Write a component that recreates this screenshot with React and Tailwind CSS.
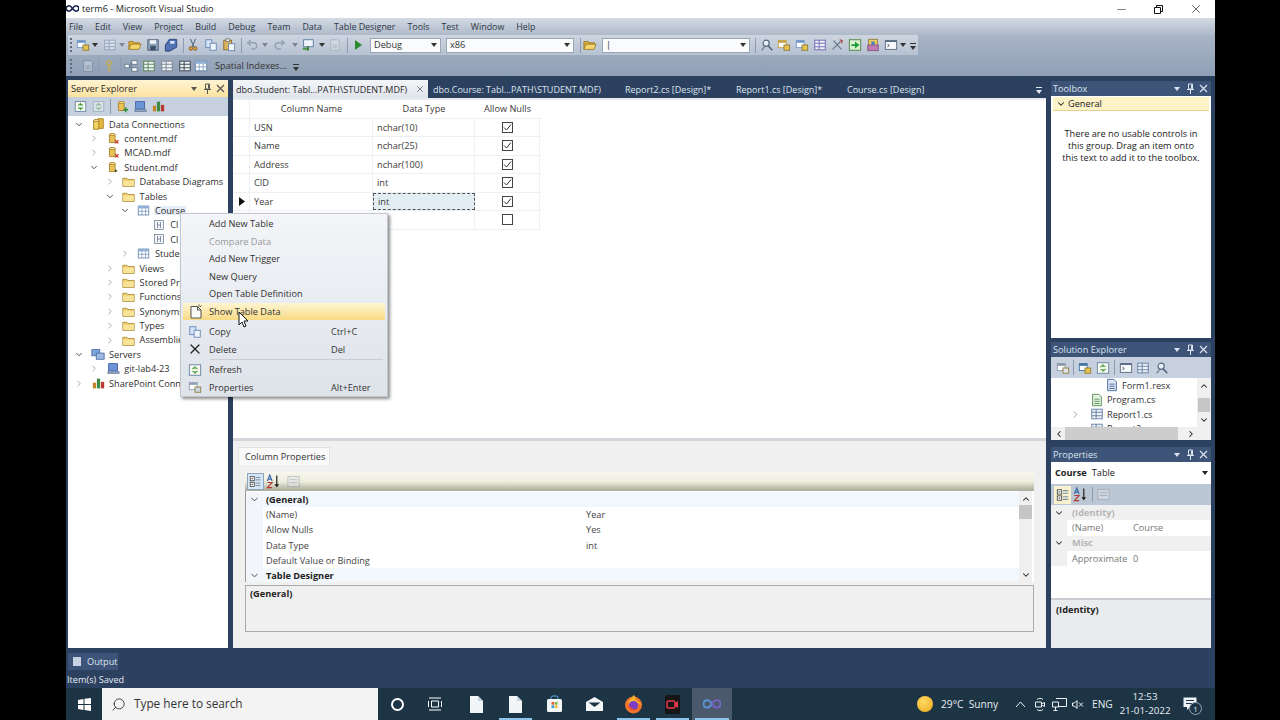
import { ChevronDown, ChevronRight, ChevronUp, ChevronLeft, X, Search, Minus } from "lucide-react";

// tiny toolbar / tree glyphs
const Svg = ({ children, s = 14, className = "" }) => (
  <svg width={s} height={s} viewBox="0 0 16 16" className={`shrink-0 ${className}`}>
    {children}
  </svg>
);

const Folder = () => (
  <Svg s={13}>
    <path d="M1 4h5l1 1.500h8V14H1z" fill="#f0cf6c" stroke="#a98a3a" strokeWidth="1" />
    <path d="M1.500 7h13v6.500h-13z" fill="#f8e39a" />
  </Svg>
);
const Cylinders = () => (
  <Svg s={14}>
    <path d="M8 2h6v11H8z" fill="#e8b93f" stroke="#a27a1d" />
    <path d="M3 4h6v10H3z" fill="#f4d468" stroke="#a27a1d" />
    <ellipse cx="6" cy="4" rx="3" ry="1.200" fill="#fbeaa8" stroke="#a27a1d" />
  </Svg>
);
const Db = ({ mark }) => (
  <Svg s={13}>
    <path d="M3 3h7v10H3z" fill="#e9c25a" stroke="#a27a1d" />
    <ellipse cx="6.500" cy="3" rx="3.500" ry="1.300" fill="#fbeaa8" stroke="#a27a1d" />
    {mark === "x" && <path d="M10 10l4 4m0-4l-4 4" stroke="#c8321e" strokeWidth="1.600" />}
    {mark === "plug" && <path d="M10 10l3 2-3 2z" fill="#333" />}
    {mark === "add" && <path d="M9 12h6M12 9v6" stroke="#2f8f36" strokeWidth="1.800" />}
  </Svg>
);
const TableIco = ({ s = 13 }) => (
  <Svg s={s}>
    <rect x="1.500" y="2.500" width="13" height="11" fill="#fff" stroke="#5c7fa8" />
    <path d="M1.500 2.500h13v3h-13z" fill="#8fb0d6" />
    <path d="M1.500 9h13M6 5.500v8M10.500 5.500v8" stroke="#7f9dbf" />
  </Svg>
);
const ColIco = () => (
  <Svg s={12}>
    <rect x="2" y="2" width="12" height="12" fill="#f4f6f9" stroke="#6d7f96" />
    <path d="M6 4v8M10 4v8M6 8h4" stroke="#5d708a" />
  </Svg>
);
const Servers = () => (
  <Svg s={14}>
    <rect x="1" y="3" width="9" height="7" fill="#7fa5dc" stroke="#4a6ea6" />
    <rect x="6" y="7" width="9" height="7" fill="#9db9e4" stroke="#4a6ea6" />
  </Svg>
);
const Computer = () => (
  <Svg s={13}>
    <rect x="2" y="2" width="11" height="9" fill="#6c93d6" stroke="#3a5c9c" />
    <path d="M1 12h14v2H1z" fill="#9fb4d2" stroke="#5f769a" />
  </Svg>
);
const SharePoint = () => (
  <Svg s={13}>
    <rect x="1" y="7" width="4" height="7" fill="#c7832c" />
    <rect x="6" y="2" width="4" height="12" fill="#3d8a45" />
    <rect x="11" y="6" width="4" height="8" fill="#b83a32" />
  </Svg>
);
const Refresh = ({ s = 14 }) => (
  <Svg s={s}>
    <rect x="1.500" y="2" width="13" height="12" fill="#f7f9f0" stroke="#5f7f9f" />
    <path d="M5 7l3-2.500V6h3M11 9l-3 2.500V10H5" stroke="#3d9a38" strokeWidth="1.300" fill="none" />
  </Svg>
);
const Sheet = ({ fill = "#fff", stroke = "#7f8ea3" }) => (
  <Svg>
    <path d="M3 1.500h7l3 3v10H3z" fill={fill} stroke={stroke} />
    <path d="M5 7h6M5 9.500h6M5 12h6" stroke={stroke} />
  </Svg>
);
const PageCorner = () => (
  <svg width="12" height="15" viewBox="0 0 12 15" className="shrink-0">
    <path d="M1 2.500h6.500L11 6v8H1z" fill="#fbfbf6" stroke="#555" />
    <path d="M7.500 2.500V6H11M9 .5v2M11.500 1.500l-1.500 1.500" stroke="#555" fill="none" />
  </svg>
);
const Boxes = ({ a = "#6f95c8", b = "#e6c34f", c = "#fff" }) => (
  <Svg>
    <rect x="1.500" y="3" width="9" height="8" fill={c} stroke={a} />
    <path d="M1.500 3h9v2.500h-9z" fill={a} />
    <rect x="8" y="8" width="6.500" height="6" fill={b} stroke="#8d7a3a" />
  </Svg>
);
const FolderOpen = () => (
  <Svg>
    <path d="M1 13V4h5l1 1.500h6V8" fill="#dcae3c" stroke="#9a7a25" />
    <path d="M1 13l2.500-6H15l-2.500 6z" fill="#f5d56d" stroke="#9a7a25" />
  </Svg>
);
const Save = ({ c = "#8aa0b8" }) => (
  <Svg>
    <rect x="2" y="2" width="12" height="12" fill={c} stroke="#50627a" />
    <rect x="4.500" y="2.500" width="7" height="4" fill="#eef2f6" />
    <rect x="5" y="9" width="6" height="5" fill="#3e5068" />
  </Svg>
);
const SaveAll = () => (
  <Svg>
    <path d="M6 1.500h8.500v9l-8 4.500h-5v-7z" fill="#4f71b4" stroke="#2b4476" />
    <path d="M7 3.500h5v3H7z" fill="#dfe7f3" />
  </Svg>
);
const Cut = () => (
  <Svg>
    <path d="M5 1l4 9M11 1L7 10" stroke="#5a6a80" strokeWidth="1.300" />
    <circle cx="5.500" cy="12" r="2" fill="#e6a23a" stroke="#7c5a20" />
    <circle cx="10.500" cy="12" r="2" fill="#e6a23a" stroke="#7c5a20" />
  </Svg>
);
const CopyIco = () => (
  <Svg>
    <rect x="2" y="2" width="7" height="9" fill="#d5e3f6" stroke="#6385b5" />
    <rect x="7" y="6" width="7" height="8" fill="#eef4fc" stroke="#6385b5" />
  </Svg>
);
const Paste = () => (
  <Svg>
    <rect x="2" y="2.500" width="9" height="11" fill="#dcb25a" stroke="#8a6b25" />
    <rect x="4.500" y="1" width="4" height="3" fill="#f2f2f2" stroke="#777" />
    <rect x="7.500" y="6.500" width="7" height="8" fill="#f3f6fb" stroke="#6385b5" />
  </Svg>
);
const Undo = ({ flip }) => (
  <Svg className={flip ? "-scale-x-100" : ""}>
    <path d="M4 5.500h6a3.500 3.500 0 0 1 0 7H7" stroke="#93a1b4" strokeWidth="1.600" fill="none" />
    <path d="M6.500 2.500l-3.500 3 3.500 3" stroke="#93a1b4" strokeWidth="1.600" fill="none" />
  </Svg>
);
const Nav = () => (
  <Svg>
    <rect x="3" y="2" width="11" height="8" fill="#f1f5fb" stroke="#54749f" />
    <path d="M2 11h7v2.500H2z" fill="#4a9a44" />
    <path d="M8 9.500v5" stroke="#2e6f2a" strokeWidth="1.500" />
  </Svg>
);
const Gear = ({ c = "#9aa6b6" }) => (
  <Svg>
    <path d="M3 2h8l2 2v10H3z" fill="#d7dde6" stroke={c} />
    <path d="M5 8h6M5 10.500h6" stroke={c} />
  </Svg>
);
const Wrench = () => (
  <Svg>
    <path d="M3 13L12 4M4 3l9 10" stroke="#6b7a8e" strokeWidth="1.500" />
    <path d="M11 2l3 1-1 3" stroke="#b13a33" strokeWidth="1.300" fill="none" />
  </Svg>
);
const GoArrow = () => (
  <Svg>
    <rect x="1.500" y="2" width="13" height="12" fill="#d8efd0" stroke="#44813c" />
    <path d="M4 7h4V4l5 4-5 4V9H4z" fill="#1d9a3a" />
  </Svg>
);
const Person = () => (
  <Svg>
    <rect x="3" y="1.500" width="10" height="9" fill="#eecb5c" stroke="#8d7a3a" />
    <rect x="2" y="8" width="12" height="6.500" fill="#c27bb2" stroke="#80557a" />
    <rect x="6" y="4" width="4" height="4" fill="#4e81b8" />
  </Svg>
);
const Term = () => (
  <Svg>
    <rect x="1.500" y="3" width="13" height="10" fill="#f8f9fb" stroke="#53657f" />
    <path d="M1.500 3h13v1.500h-13z" fill="#53657f" />
    <path d="M4 7l2 1.500L4 10" stroke="#333" fill="none" />
  </Svg>
);
const Key = () => (
  <Svg>
    <circle cx="8" cy="4.500" r="2.500" fill="none" stroke="#c4ad52" strokeWidth="1.500" />
    <path d="M8 7v7M8 11h2M8 13.500h2" stroke="#c4ad52" strokeWidth="1.500" />
  </Svg>
);
const Relations = () => (
  <Svg>
    <rect x="9" y="2" width="6" height="4" fill="#fff" stroke="#61748c" />
    <rect x="9" y="10" width="6" height="4" fill="#fff" stroke="#61748c" />
    <rect x="1" y="6" width="5" height="4" fill="#fff" stroke="#61748c" />
    <path d="M6 8h2V4h1M8 8v4h1" stroke="#61748c" fill="none" />
  </Svg>
);
const Grid2 = ({ c = "#5c7aa0" }) => (
  <Svg>
    <rect x="2" y="2.500" width="12" height="11" fill="#eef2f7" stroke={c} />
    <path d="M2 6h12M2 10h12M7 2.500v11" stroke={c} />
  </Svg>
);
const Magnify = () => (
  <Svg>
    <circle cx="7" cy="6" r="3.500" fill="#e7eef7" stroke="#55677f" strokeWidth="1.300" />
    <path d="M9.500 9l4.500 5" stroke="#55677f" strokeWidth="1.800" />
    <path d="M2 14l3-4" stroke="#55677f" strokeWidth="1.300" />
  </Svg>
);
const Categorized = ({ s = 15 }) => (
  <Svg s={s}>
    <rect x="1.500" y="2" width="5" height="5" fill="#fff" stroke="#444" />
    <rect x="1.500" y="9" width="5" height="5" fill="#fff" stroke="#444" />
    <path d="M3 4.500h2M3 11.500h2" stroke="#222" />
    <path d="M8 3h6M8 6h6M8 10h6M8 13h6" stroke="#7b8ea6" strokeWidth="1.200" />
  </Svg>
);
const SortAz = ({ s = 15 }) => (
  <Svg s={s}>
    <path d="M1.500 7.500L4 1l2.500 6.500M2.500 5.500h3" stroke="#3a66a8" strokeWidth="1.200" fill="none" />
    <path d="M1.500 9h5L1.500 14.500h5" stroke="#b03a30" strokeWidth="1.200" fill="none" />
    <path d="M11.500 1.500v11" stroke="#222" strokeWidth="1.300" />
    <path d="M9 11l2.500 3.500L14 11z" fill="#222" />
  </Svg>
);
const Pages = () => (
  <Svg s={15} className="opacity-50">
    <rect x="2" y="2.500" width="12" height="11" fill="#e1e4e8" stroke="#8f98a3" />
    <path d="M4 6h8M4 9h8" stroke="#8f98a3" />
  </Svg>
);

const Caret = ({ c = "#333", className = "" }) => (
  <svg width="6" height="4" viewBox="0 0 6 4" className={`shrink-0 ${className}`}>
    <path d="M0 0h6L3 4z" fill={c} />
  </svg>
);
const Sep = ({ className = "" }) => <div className={`w-px h-[15px] bg-[#8d9bb0] shrink-0 ${className}`} />;
const Grip = () => <div className="w-[2px] h-[14px] shrink-0 border-l-2 border-dotted border-[#5d6d84]" />;
const Overflow = ({ c = "#333" }) => (
  <div className="flex flex-col gap-[2px] items-center w-[6px] shrink-0 mt-[3px]">
    <div className={`w-[6px] h-px ${c === "#333" ? "bg-[#333]" : "bg-[#e4e9f0]"}`} />
    <Caret c={c} />
  </div>
);
const PanelBtns = ({ c }) => (
  <div className="ml-auto flex items-center gap-[4px]">
    <Caret c={c} />
    <svg width="9" height="11" viewBox="0 0 9 11" className="ml-[2px]">
      <path d="M2.500 1h4v5h-4zM1 6.500h7M4.500 6.500V11M5.500 1.500v4" stroke={c} fill="none" />
    </svg>
    <svg width="9" height="9" viewBox="0 0 9 9">
      <path d="M1 1l7 7M8 1L1 8" stroke={c} strokeWidth="1.200" />
    </svg>
  </div>
);
const Combo = ({ w, text }) => (
  <div className={`${w} h-[15px] bg-[#fafbfc] border border-[#9aa6b6] flex items-center pl-[3px] pr-[3px] shrink-0`}>
    <span className="text-[#333]">{text}</span>
    <Caret c="#333" className="ml-auto" />
  </div>
);

const tree = [
  { l: 0, t: "Data Connections", o: 1, i: <Cylinders /> },
  { l: 1, t: "content.mdf", i: <Db mark="x" /> },
  { l: 1, t: "MCAD.mdf", i: <Db mark="x" /> },
  { l: 1, t: "Student.mdf", o: 1, i: <Db mark="plug" /> },
  { l: 2, t: "Database Diagrams", i: <Folder /> },
  { l: 2, t: "Tables", o: 1, i: <Folder /> },
  { l: 3, t: "Course", o: 1, i: <TableIco />, sel: 1 },
  { l: 4, t: "Cl", i: <ColIco />, leaf: 1 },
  { l: 4, t: "Cl", i: <ColIco />, leaf: 1 },
  { l: 3, t: "Student", i: <TableIco /> },
  { l: 2, t: "Views", i: <Folder /> },
  { l: 2, t: "Stored Procedures", i: <Folder /> },
  { l: 2, t: "Functions", i: <Folder /> },
  { l: 2, t: "Synonyms", i: <Folder /> },
  { l: 2, t: "Types", i: <Folder /> },
  { l: 2, t: "Assemblies", i: <Folder /> },
  { l: 0, t: "Servers", o: 1, i: <Servers /> },
  { l: 1, t: "git-lab4-23", i: <Computer /> },
  { l: 0, t: "SharePoint Connections", i: <SharePoint /> },
];

function TreeRow({ row }) {
  return (
    <div className="h-[14.4px] flex items-center whitespace-nowrap text-[#2f2f2f]" style={{ paddingLeft: row.l * 15.3 + 6 }}>
      <div className="w-[10px] flex justify-center shrink-0">
        {!row.leaf &&
          (row.o ? (
            <ChevronDown size={11} strokeWidth={2} className="text-[#333]" />
          ) : (
            <ChevronRight size={11} strokeWidth={2} className="text-[#9a9a9a]" />
          ))}
      </div>
      <div className="w-[14px] ml-[7px] flex justify-center shrink-0">{row.i}</div>
      <span className={`ml-[3px] px-[1px] ${row.sel ? "bg-[#e4ecf5]" : ""}`}>{row.t}</span>
    </div>
  );
}

const columns = [
  ["USN", "nchar(10)", true],
  ["Name", "nchar(25)", true],
  ["Address", "nchar(100)", true],
  ["CID", "int", true],
  ["Year", "int", true, true],
  ["", "", false],
];

function Check({ on }) {
  return (
    <div className="w-[11px] h-[11px] border border-[#444] bg-white flex items-center justify-center">
      {on && (
        <svg width="9" height="9" viewBox="0 0 9 9">
          <path d="M1 4.500l2.500 2.500L8 1.500" stroke="#333" fill="none" />
        </svg>
      )}
    </div>
  );
}

function MenuItem({ icon, text, hint, dim, hot }) {
  return (
    <div
      className={`h-[17.5px] flex items-center relative ${
        hot ? "bg-gradient-to-b from-[#fdf5d2] to-[#f9da82] mx-[2px]" : ""
      } ${dim ? "text-[#9a9a9a]" : "text-[#333]"}`}
    >
      <div className={`${hot ? "w-[26px]" : "w-[28px]"} flex justify-center shrink-0`}>{icon}</div>
      <span>{text}</span>
      {hint && <span className="absolute left-[150px]">{hint}</span>}
    </div>
  );
}

function ContextMenu() {
  return (
    <div className="absolute left-[180px] top-[213px] w-[208px] h-[184px] pt-[1px] bg-gradient-to-b from-[#f3f5f8] to-[#dee3ea] border border-[#c3c8cf] shadow-[2px_2px_3px_rgba(0,0,0,0.45)]">
      <MenuItem text="Add New Table" />
      <MenuItem text="Compare Data" dim />
      <MenuItem text="Add New Trigger" />
      <MenuItem text="New Query" />
      <MenuItem text="Open Table Definition" />
      <MenuItem text="Show Table Data" hot icon={<PageCorner />} />
      <div className="h-[3px]" />
      <MenuItem text="Copy" hint="Ctrl+C" icon={<CopyIco />} />
      <MenuItem text="Delete" hint="Del" icon={<X size={16} strokeWidth={1.800} className="text-[#222]" />} />
      <div className="h-px ml-[29px] my-px bg-[#c9ced6] mr-[4px]" />
      <MenuItem text="Refresh" icon={<Refresh />} />
      <MenuItem text="Properties" hint="Alt+Enter" icon={<Boxes a="#8ea0b6" b="#cfd6df" />} />
    </div>
  );
}

const Cursor = () => (
  <svg width="12" height="17" viewBox="0 0 12 17" className="absolute left-[238px] top-[311px]">
    <path d="M1 1v13l3-3 2 5 2-1-2-5h4z" fill="#fff" stroke="#111" strokeWidth="1" />
  </svg>
);

function PropRow({ name, value, head }) {
  return (
    <div className={`h-[15.2px] flex items-center ${head ? "bg-[#f2f7fb]" : ""}`}>
      <div className="w-[17px] h-full bg-[#f2f6fa] flex items-center justify-center shrink-0">
        {head && <ChevronDown size={11} strokeWidth={2} className="text-[#444]" />}
      </div>
      <span className={`ml-[3px] w-[320px] shrink-0 ${head ? "font-bold text-[#222]" : "text-[#444]"}`}>{name}</span>
      <span className="text-[#444]">{value}</span>
    </div>
  );
}

const SideTitle = ({ children }) => (
  <div className="h-[15px] bg-[#3d5478] flex items-center pl-[2px] pr-[3px] text-[#dbe3ee] shrink-0">
    {children}
    <PanelBtns c="#dbe3ee" />
  </div>
);

const TaskIcon = ({ children, mark, active }) => (
  <div className={`w-[39.3px] h-full flex items-center justify-center relative shrink-0 ${active ? "bg-[#4a5a6c]" : ""}`}>
    {children}
    {mark && <div className="absolute bottom-0 left-[3px] right-[3px] h-[2px] bg-[#8cc4ec]" />}
  </div>
);

const Doc = () => (
  <svg width="13" height="17" viewBox="0 0 13 17">
    <path d="M0 0h8l5 5v12H0z" fill="#f2f5f7" />
    <path d="M8 0l5 5H8z" fill="#c7d2da" />
  </svg>
);

const VsLogo = ({ w = 13, a = "#0b1f4a", b = "#0b1f4a" }) => (
  <svg width={w} height={w * 0.54} viewBox="0 0 24 13" className="shrink-0">
    <path d="M12 6.500C9 2 7.500 1.500 5.500 1.500a5 5 0 0 0 0 10c2 0 3.500-.5 6.500-5z" fill="none" stroke={a} strokeWidth="2.600" />
    <path d="M12 6.500c3-4.500 4.500-5 6.500-5a5 5 0 0 1 0 10c-2 0-3.500-.5-6.500-5z" fill="none" stroke={b} strokeWidth="2.600" />
  </svg>
);

export default function App() {
  return (
    <div className="w-[1280px] h-[720px] bg-black overflow-hidden relative font-['Open_Sans',sans-serif] text-[9.2px] leading-none">
      <div className="ml-[66px] w-[1149px] h-full flex flex-col bg-[#2c405f]">
        {/* title bar */}
        <div className="h-[18px] bg-white flex items-center shrink-0 text-[#222]">
          <VsLogo />
          <span className="ml-[3px]">term6 - Microsoft Visual Studio</span>
          <div className="ml-auto flex items-center pr-[1px]">
            <div className="w-[37px] flex justify-center"><Minus size={13} strokeWidth={1} className="text-[#111]" /></div>
            <div className="w-[37px] flex justify-center">
              <svg width="9" height="9" viewBox="0 0 9 9">
                <path d="M.5 2.500h6v6h-6zM2.500 2.500v-2h6v6h-2" fill="none" stroke="#111" />
              </svg>
            </div>
            <div className="w-[37px] flex justify-center"><X size={14} strokeWidth={1.100} className="text-[#111]" /></div>
          </div>
        </div>

        {/* menu */}
        <div className="h-[17px] shrink-0 bg-gradient-to-b from-[#d3dae3] to-[#aeb9c9] flex items-center pl-[3px] pt-[1px] gap-[12px] text-[#2c3645] text-[8.9px]">
          {["File", "Edit", "View", "Project", "Build", "Debug", "Team", "Data", "Table Designer", "Tools", "Test", "Window", "Help"].map((m) => (
            <span key={m}>{m}</span>
          ))}
        </div>

        <div className="h-[41px] shrink-0 bg-gradient-to-b from-[#a9b5c6] to-[#8f9fb5]">
          {/* standard toolbar */}
          <div className="ml-[2px] w-[850px] h-[20px] bg-gradient-to-b from-[#ced5e0] to-[#b6c1d1] flex items-center pl-[2px] text-[#333]">
            <Grip />
            <div className="ml-[4px]"><Boxes /></div>
            <Caret className="ml-[2px]" />
            <div className="ml-[5px] opacity-50"><Grid2 /></div>
            <Caret c="#7b8798" className="ml-[2px]" />
            <div className="ml-[3px]"><FolderOpen /></div>
            <div className="ml-[4px]"><Save /></div>
            <div className="ml-[4px]"><SaveAll /></div>
            <Sep className="ml-[5px]" />
            <div className="ml-[2px]"><Cut /></div>
            <div className="ml-[4px]"><CopyIco /></div>
            <div className="ml-[4px]"><Paste /></div>
            <Sep className="ml-[5px]" />
            <div className="ml-[3px]"><Undo /></div>
            <Caret c="#7b8798" className="ml-[3px]" />
            <div className="ml-[5px]"><Undo flip /></div>
            <Caret c="#7b8798" className="ml-[5px]" />
            <div className="ml-[3px]"><Nav /></div>
            <Caret className="ml-[4px]" />
            <div className="ml-[3px] opacity-60"><Gear /></div>
            <Sep className="ml-[5px]" />
            <svg width="14" height="14" viewBox="0 0 14 14" className="ml-[3px] shrink-0">
              <path d="M4 2l7 5-7 5z" fill="#2b8a2e" />
            </svg>
            <div className="ml-[5px]"><Combo w="w-[71px]" text="Debug" /></div>
            <div className="ml-[5px]"><Combo w="w-[128px]" text="x86" /></div>
            <Sep className="ml-[6px]" />
            <div className="ml-[2px]"><FolderOpen /></div>
            <div className="ml-[5px]"><Combo w="w-[148px]" text="|" /></div>
            <Sep className="ml-[5px]" />
            <div className="ml-[4px]"><Magnify /></div>
            <div className="ml-[3px]"><Boxes a="#c2a13f" /></div>
            <div className="ml-[4px]"><Boxes /></div>
            <div className="ml-[4px]"><Grid2 c="#6a5fb0" /></div>
            <div className="ml-[3px]"><Wrench /></div>
            <div className="ml-[4px]"><GoArrow /></div>
            <div className="ml-[4px]"><Person /></div>
            <div className="ml-[4px]"><Term /></div>
            <Caret className="ml-[2px]" />
            <div className="ml-[4px]"><Overflow /></div>
          </div>
          {/* table designer toolbar */}
          <div className="h-[21px] flex items-center pl-[4px] text-[#333]">
            <Grip />
            <div className="ml-[9px] opacity-50"><Gear c="#6d7888" /></div>
            <Sep className="ml-[3px]" />
            <div className="ml-[3px]"><Key /></div>
            <Sep className="ml-[4px]" />
            <div className="ml-[3px]"><Relations /></div>
            <div className="ml-[4px]"><Grid2 c="#4f7f4a" /></div>
            <div className="ml-[4px]"><Grid2 c="#767f8c" /></div>
            <div className="ml-[4px]"><Grid2 c="#2f3a48" /></div>
            <div className="ml-[2px]"><TableIco s={14} /></div>
            <span className="ml-[7px] w-[69px] whitespace-nowrap">Spatial Indexes...</span>
            <div className="ml-[9px]"><Overflow /></div>
          </div>
        </div>

        {/* docked panels */}
        <div className="flex-1 min-h-0 flex pt-[4px] pl-[2px] pr-[3px]">
          {/* server explorer */}
          <div className="w-[160px] shrink-0 h-[568px] flex flex-col bg-white">
            <div className="h-[17px] bg-gradient-to-b from-[#fff4d2] to-[#fbe29f] flex items-center pl-[3px] pr-[3px] text-[#2b2b2b] shrink-0">
              Server Explorer
              <PanelBtns c="#555" />
            </div>
            <div className="h-[19px] bg-[#c6d0de] flex items-center pl-[6px] shrink-0">
              <Refresh s={13} />
              <div className="ml-[5px] opacity-40"><Refresh s={13} /></div>
              <Sep className="ml-[5px]" />
              <div className="ml-[5px]"><Db mark="add" /></div>
              <div className="ml-[5px]"><Computer /></div>
              <div className="ml-[5px]"><SharePoint /></div>
            </div>
            <div className="pt-[1px] overflow-hidden">
              {tree.map((r, i) => (
                <TreeRow key={i} row={r} />
              ))}
            </div>
          </div>

          {/* centre */}
          <div className="w-[813px] shrink-0 ml-[5px] h-[568px] flex flex-col">
            <div className="h-[18px] flex items-center shrink-0 text-[#dde5ef] whitespace-nowrap text-[9px]">
              <div className="w-[195px] h-full bg-gradient-to-b from-[#f3f5f8] to-[#dfe4eb] flex items-center pl-[3px] text-[#2a2a2a] shrink-0">
                dbo.Student: Tabl...PATH\STUDENT.MDF)
                <X size={10} strokeWidth={1.500} className="ml-auto mr-[3px] text-[#444]" />
              </div>
              <span className="ml-[5px] w-[192px] shrink-0">dbo.Course: Tabl...PATH\STUDENT.MDF)</span>
              <span className="w-[111px] shrink-0">Report2.cs [Design]*</span>
              <span className="w-[111px] shrink-0">Report1.cs [Design]*</span>
              <span className="w-[78px] shrink-0">Course.cs [Design]</span>
              <div className="ml-auto mr-[4px]"><Overflow c="#e4e9f0" /></div>
            </div>
            <div className="h-[2px] bg-[#e8ebf0] shrink-0" />

            {/* table design */}
            <div className="h-[338px] bg-white shrink-0 text-[#3a3a3a]">
              <div className="h-[18.500px] flex items-center border-b border-[#eef0f3] w-[308px]">
                <div className="w-[17px] h-full border-r border-[#eef0f3]" />
                <div className="w-[123px] text-center">Column Name</div>
                <div className="w-[102px] text-center">Data Type</div>
                <div className="w-[65px] text-center">Allow Nulls</div>
              </div>
              {columns.map(([name, type, on, cur], i) => (
                <div key={i} className="h-[18.5px] flex items-center border-b border-[#eef0f3] w-[308px]">
                  <div className="w-[17px] h-full border-r border-[#eef0f3] flex items-center justify-center pl-[1px]">
                    {cur && (
                      <svg width="6" height="9" viewBox="0 0 6 9">
                        <path d="M0 0l6 4.500L0 9z" fill="#111" />
                      </svg>
                    )}
                  </div>
                  <div className="w-[123px] h-full flex items-center pl-[4px] border-r border-[#eef0f3]">{name}</div>
                  <div className={`w-[102px] h-full flex items-center pl-[4px] ${cur ? "bg-[#e3eef4] border border-dashed border-[#555]" : "border-r border-[#eef0f3]"}`}>{type}</div>
                  <div className="w-[65px] h-full flex items-center justify-center border-r border-[#eef0f3]">
                    <Check on={on} />
                  </div>
                </div>
              ))}
            </div>

            <div className="h-[3px] bg-[#d3d6da] shrink-0" />

            {/* column properties */}
            <div className="flex-1 bg-[#f0f0f0] pt-[6px] text-[#333]">
              <div className="ml-[5px] w-[92px] h-[18px] bg-[#f9f9f9] border border-b-0 border-[#e2e2e2] flex items-center pl-[6px] whitespace-nowrap">Column Properties</div>
              <div className="ml-[12px] mt-[7px] w-[789px]">
                <div className="h-[19px] bg-gradient-to-b from-[#f7f7ee] via-[#eeeedf] to-[#a9a99a] flex items-center pl-[2px]">
                  <div className="w-[17px] h-[17px] bg-[#d6e6f5] border border-[#8aa5c2] flex items-center justify-center"><Categorized s={13} /></div>
                  <div className="ml-[2px]"><SortAz /></div>
                  <div className="ml-[5px]"><Pages /></div>
                </div>
                <div className="h-[91px] flex bg-white border-l border-[#999]">
                  <div className="flex-1 pt-[1px] overflow-hidden">
                    <PropRow name="(General)" head />
                    <PropRow name="(Name)" value="Year" />
                    <PropRow name="Allow Nulls" value="Yes" />
                    <PropRow name="Data Type" value="int" />
                    <PropRow name="Default Value or Binding" />
                    <PropRow name="Table Designer" head />
                  </div>
                  <div className="w-[13px] mr-[2px] bg-[#f0f0f0] flex flex-col items-center shrink-0 pt-[3px] pb-[2px]">
                    <ChevronUp size={10} strokeWidth={2.500} className="text-[#222] shrink-0" />
                    <div className="w-full h-[14px] bg-[#c6c6c6] mt-[1px] shrink-0" />
                    <ChevronDown size={10} strokeWidth={2.500} className="text-[#222] mt-auto shrink-0" />
                  </div>
                </div>
                <div className="h-[47px] mt-[3px] border border-[#aaa] pl-[4px] pt-[3px] font-bold text-[#222]">(General)</div>
              </div>
            </div>
          </div>

          {/* right docks */}
          <div className="w-[160px] shrink-0 ml-[5px] pt-[1px] flex flex-col">
            <SideTitle>Toolbox</SideTitle>
            <div className="h-[242px] bg-white pt-[1px] shrink-0">
              <div className="h-[14px] mx-[2px] bg-[#fdf3c8] border-b border-[#e6d28a] flex items-center pl-[3px] gap-[2px] text-[#222]">
                <ChevronDown size={10} strokeWidth={2.500} />
                General
              </div>
              <p className="mt-[17px] text-center leading-[12px] text-[#222]">
                There are no usable controls in
                <br />
                this group. Drag an item onto
                <br />
                this text to add it to the toolbox.
              </p>
            </div>
            <div className="h-[4px] shrink-0" />
            <SideTitle>Solution Explorer</SideTitle>
            <div className="h-[21px] bg-[#c6d0de] flex items-center pl-[5px] shrink-0">
              <Boxes a="#8a97a8" b="#dfe3e8" />
              <Sep className="ml-[3px]" />
              <div className="ml-[4px]"><Boxes a="#3f6f9f" /></div>
              <div className="ml-[4px]"><Refresh /></div>
              <Sep className="ml-[4px]" />
              <div className="ml-[4px]"><Term /></div>
              <div className="ml-[3px]"><Grid2 /></div>
              <div className="ml-[5px]"><Magnify /></div>
            </div>
            <div className="h-[49px] flex bg-white shrink-0 overflow-hidden text-[#333]">
              <div className="flex-1 min-w-0">
                <div className="h-[14.5px] flex items-center pl-[54px] gap-[3px]"><Sheet fill="#dfe8f5" stroke="#3f5f94" />Form1.resx</div>
                <div className="h-[14.5px] flex items-center pl-[39px] gap-[3px]"><Sheet fill="#e8f3e6" stroke="#4a8a45" />Program.cs</div>
                <div className="h-[14.5px] flex items-center pl-[19px]">
                  <ChevronRight size={11} strokeWidth={2} className="text-[#9a9a9a]" />
                  <div className="ml-[9px] mr-[3px]"><Grid2 /></div>
                  Report1.cs
                </div>
                <div className="h-[14.500px] flex items-center pl-[39px] gap-[3px]"><Grid2 />Report2</div>
              </div>
              <div className="w-[14px] bg-[#f0f0f0] flex flex-col items-center shrink-0 pt-[3px]">
                <ChevronUp size={10} strokeWidth={2.500} className="text-[#222] shrink-0" />
                <div className="w-[12px] h-[14px] bg-[#c6c6c6] mt-[7px] shrink-0" />
                <ChevronDown size={10} strokeWidth={2.500} className="text-[#222] mt-[3px] shrink-0" />
              </div>
            </div>
            <div className="h-[13px] bg-[#f0f0f0] flex items-center justify-between px-[3px] shrink-0">
              <ChevronLeft size={10} strokeWidth={2.500} className="text-[#222]" />
              <div className="w-[113px] h-full bg-[#cdcdcd] ml-[1px] mr-auto" />
              <ChevronRight size={10} strokeWidth={2.500} className="text-[#222] mr-[12px]" />
            </div>
            <div className="h-[7px] shrink-0" />
            <SideTitle>Properties</SideTitle>
            <div className="h-[22px] bg-white flex items-center pl-[4px] pr-[3px] text-[#222] shrink-0">
              <span className="font-bold">Course</span>
              <span className="ml-[5px]">Table</span>
              <Caret c="#222" className="ml-auto" />
            </div>
            <div className="h-[21px] bg-[#bcc7d5] flex items-center pl-[3px] shrink-0">
              <div className="w-[17px] h-[18px] bg-[#f7f1cf] flex items-center justify-center"><Categorized s={14} /></div>
              <div className="ml-[2px]"><SortAz /></div>
              <Sep className="ml-[4px]" />
              <div className="ml-[3px]"><Pages /></div>
            </div>
            <div className="h-[93px] bg-white shrink-0 text-[#777]">
              <div className="h-[15px] bg-[#f0f0f0] flex items-center text-[#b5b5b5] font-bold">
                <div className="w-[16px] flex justify-center"><ChevronDown size={10} strokeWidth={2.500} className="text-[#333]" /></div>
                <span className="ml-[5px]">(Identity)</span>
              </div>
              <div className="h-[15.500px] flex items-center">
                <div className="w-[16px] h-full bg-[#f0f0f0]" />
                <span className="ml-[5px] w-[61px]">(Name)</span>
                <span>Course</span>
              </div>
              <div className="h-[15px] bg-[#f0f0f0] flex items-center text-[#b5b5b5] font-bold">
                <div className="w-[16px] flex justify-center"><ChevronDown size={10} strokeWidth={2.500} className="text-[#333]" /></div>
                <span className="ml-[5px]">Misc</span>
              </div>
              <div className="h-[15.500px] flex items-center">
                <div className="w-[16px] h-full bg-[#f0f0f0]" />
                <span className="ml-[5px] w-[61px]">Approximate</span>
                <span>0</span>
              </div>
            </div>
            <div className="h-[2px] bg-[#c9cdd2] shrink-0" />
            <div className="h-[48px] bg-[#e9ebee] pl-[5px] pt-[5px] font-bold text-[#222] shrink-0">(Identity)</div>
          </div>
        </div>

        {/* output tab + status */}
        <div className="h-[19px] shrink-0 pl-[2px] flex items-start">
          <div className="w-[50px] h-[17px] bg-[#3d5478] flex items-center pl-[5px] gap-[6px] text-[#dde5ef]">
            <div className="w-[8px] h-[9px] bg-[#c8d3e2]" />
            Output
          </div>
        </div>
        <div className="h-[16px] shrink-0 flex items-center pl-px text-[#e6ecf4]">Item(s) Saved</div>

        {/* taskbar */}
        <div className="h-[32px] shrink-0 bg-[#1c3444] flex items-center text-white">
          <div className="w-[36px] flex justify-center shrink-0">
            <svg width="13" height="13" viewBox="0 0 13 13">
              <path d="M0 2l5.500-1v5H0zM6.500.8L13 0v6H6.500zM0 7h5.500v5L0 11zM6.500 7H13v6l-6.500-.9z" fill="#fff" />
            </svg>
          </div>
          <div className="w-[276px] h-full bg-[#f3f3f3] flex items-center pl-[9px] text-[#333] text-[11.8px] shrink-0">
            <Search size={15} strokeWidth={1.300} className="-scale-x-100 text-[#222]" />
            <span className="ml-[8px]">Type here to search</span>
          </div>
          <TaskIcon>
            <div className="w-[13px] h-[13px] rounded-full border-2 border-white" />
          </TaskIcon>
          <TaskIcon>
            <svg width="14" height="16" viewBox="0 0 14 16" className="-ml-[3px]">
              <path d="M1 2h12M1 14h12M3.500 5h7v6h-7zM.5 5v6M13.500 5v6" stroke="#fff" fill="none" />
            </svg>
          </TaskIcon>
          <TaskIcon><Doc /></TaskIcon>
          <TaskIcon mark><Doc /></TaskIcon>
          <TaskIcon>
            <svg width="17" height="18" viewBox="0 0 17 18">
              <path d="M5 4V2.500A2 2 0 0 1 7 1h3a2 2 0 0 1 2 1.500V4" stroke="#5ab1e8" fill="none" />
              <rect x="1" y="4" width="15" height="13" rx="1.500" fill="#f4f5f7" />
              <rect x="5.500" y="7" width="2.700" height="2.700" fill="#ea5a30" />
              <rect x="8.800" y="7" width="2.700" height="2.700" fill="#7cb93a" />
              <rect x="5.500" y="10.300" width="2.700" height="2.700" fill="#2ea4e5" />
              <rect x="8.800" y="10.300" width="2.700" height="2.700" fill="#f4b92f" />
            </svg>
          </TaskIcon>
          <TaskIcon>
            <svg width="17" height="14" viewBox="0 0 17 14">
              <path d="M0 5l8.500-5L17 5v9H0z" fill="#f4f6f8" />
              <path d="M2.500 5.500h12L8.500 10z" fill="#1c3444" />
            </svg>
          </TaskIcon>
          <TaskIcon mark>
            <svg width="19" height="20" viewBox="0 0 19 20">
              <circle cx="9.500" cy="11" r="8.500" fill="#f0742c" />
              <path d="M9.500 1c3 2 1 4 3 5.500 2 1.500 4 1 4.500 4.500-3-3-8-3.500-13-1.500C5 5 8.500 4 9.500 1z" fill="#f7b52e" />
              <circle cx="9.500" cy="11.500" r="4.500" fill="#7a3ec9" />
              <path d="M4 12c1 4 6 6 10 3-3 1-6 0-7-2z" fill="#f04a2c" />
            </svg>
          </TaskIcon>
          <TaskIcon mark>
            <svg width="15" height="19" viewBox="0 0 15 19">
              <rect width="15" height="19" rx="2" fill="#151515" />
              <rect x="2" y="6" width="8" height="7" rx="1.500" fill="none" stroke="#e8394b" strokeWidth="1.500" />
              <path d="M10 8l3-2v7l-3-2z" fill="#e8394b" />
            </svg>
          </TaskIcon>
          <TaskIcon mark active><VsLogo w={18} a="#5d92d6" b="#7862c4" /></TaskIcon>

          <div className="ml-auto flex items-center shrink-0 text-[#e7edf3] text-[10.2px] pr-[14px]">
            <div className="w-[16px] h-[16px] rounded-full bg-[radial-gradient(circle_at_40%_35%,#ffd863,#eda81e)]" />
            <span className="ml-[8px] w-[74px] whitespace-nowrap">29°C&nbsp; Sunny</span>
            <svg width="11" height="7" viewBox="0 0 11 7">
              <path d="M1 6l4.500-5L10 6" stroke="#eef2f6" fill="none" />
            </svg>
            <svg width="12" height="15" viewBox="0 0 12 15" className="ml-[8px]">
              <path d="M3 2.500C4.500 1 7.500 1 9 2.500M3 12.500c1.500 1.500 4.500 1.500 6 0M1.500 5h6v5h-6zM7.500 7l3-1.500v4L7.500 8" stroke="#eef2f6" fill="none" />
            </svg>
            <svg width="15" height="13" viewBox="0 0 15 13" className="ml-[6px]">
              <path d="M4 .5h10.500v8H7M.5 4h6v5h-6zM3.500 9v3M1.500 12.500h4" stroke="#eef2f6" fill="none" />
            </svg>
            <svg width="12" height="11" viewBox="0 0 12 11" className="ml-[5px]">
              <path d="M.5 4h2L5 1.500v8L2.500 7h-2zM7 3.500l4 4m0-4l-4 4" stroke="#eef2f6" fill="none" />
            </svg>
            <span className="ml-[8px] w-[24px]">ENG</span>
            <div className="w-[54px] flex flex-col items-center gap-[4px] ml-[2px] text-[9.8px]">
              <span>12:53</span>
              <span>21-01-2022</span>
            </div>
            <div className="relative ml-[11px] w-[18px]">
              <svg width="14" height="14" viewBox="0 0 14 14">
                <path d="M.5.500h13v9.500H7L4 13v-3H.5z" fill="#eef2f6" />
                <path d="M3 3.500h8M3 6.500h8" stroke="#1c3444" />
              </svg>
              <div className="absolute left-[6px] top-[5px] w-[13px] h-[13px] rounded-full bg-[#1c3444] border border-[#9aa6b2] flex items-center justify-center text-[8px]">1</div>
            </div>
          </div>
        </div>
      </div>

      <ContextMenu />
      <Cursor />
    </div>
  );
}
